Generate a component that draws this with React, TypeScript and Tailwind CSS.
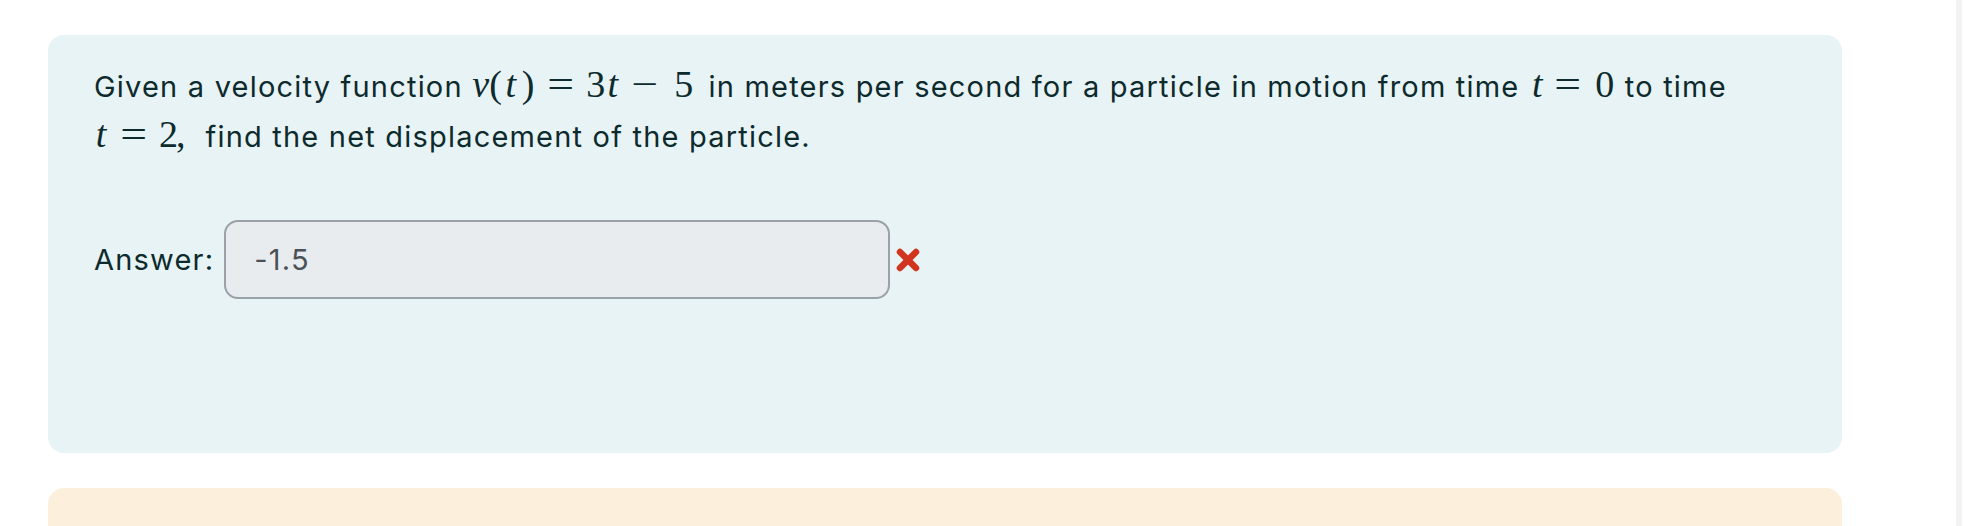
import React from "react";

const serif = { fontFamily: '"Liberation Serif", "DejaVu Serif", serif' };

const G = ({ w, i, children }: { w: string; i?: boolean; children: React.ReactNode }) => (
  <span
    className={(i ? "italic " : "not-italic ") + "inline-block text-center " + w}
    style={serif}
  >
    {children}
  </span>
);

const Op = ({ w, children }: { w: string; children: React.ReactNode }) => (
  <span className={"inline-block text-center not-italic " + w} style={serif}>
    <span className="inline-block scale-x-125">{children}</span>
  </span>
);

export default function App() {
  return (
    <div className="flex min-h-screen w-full bg-white">
      <div className="flex-1 pl-[48px] pt-[35px]">
        <div className="w-[1794px]">
          <div className="h-[418px] rounded-2xl bg-[#e7f3f5] px-[46px] pt-[25px] text-[29px] leading-[47px] tracking-[1.2px] text-[#0d2a2d] font-['Inter','Liberation_Sans',sans-serif]">
            <p>
              Given a velocity function{" "}
              <span className="text-[38px] tracking-normal">
                <G w="w-[17px]" i>v</G>
                <G w="w-[11px]">(</G>
                <G w="w-[21px]" i>t</G>
                <G w="w-[14px]">)</G>
                <Op w="w-[51px]">=</Op>
                <G w="w-[17px]">3</G>
                <G w="w-[19px]" i>t</G>
                <Op w="w-[46px]">{"\u2212"}</Op>
                <G w="w-[31px]">5</G>
              </span>{" "}
              in meters per second for a particle in motion from time{" "}
              <span className="text-[38px] tracking-normal">
                <G w="w-[17px]" i>t</G>
                <Op w="w-[43px]">=</Op>
                <G w="w-[32px]">0</G>
              </span>
              <span className="ml-[4px]">to time</span>
              <br />
              <span className="text-[38px] tracking-normal">
                <G w="w-[14px]" i>t</G>
                <Op w="w-[51px]">=</Op>
                <G w="w-[17px]">2</G>
                <span style={serif}>,</span>
              </span>
              <span className="inline-block w-[20px]" />
              find the net displacement of the particle.
            </p>
            <div className="mt-[60px] flex items-center">
              <span className="mr-[10px]">Answer:</span>
              <div className="flex h-[79px] w-[666px] items-center rounded-[14px] border-2 border-[#9aa1a9] bg-[#e8ecef] px-[28px] text-[#4b5157]">
                -1.5
              </div>
              <svg className="ml-[5px]" width="26" height="26" viewBox="0 0 26 26">
                <path d="M5 5 L21 21 M21 5 L5 21" stroke="#d1341f" strokeWidth="6.5" strokeLinecap="round" />
              </svg>
            </div>
          </div>
          <div className="mt-[35px] h-[60px] rounded-t-2xl bg-[#fcefdc]" />
        </div>
      </div>
      <div className="w-[6px] bg-[#f3f3f3]" />
      <div className="w-[6px] bg-white" />
    </div>
  );
}
